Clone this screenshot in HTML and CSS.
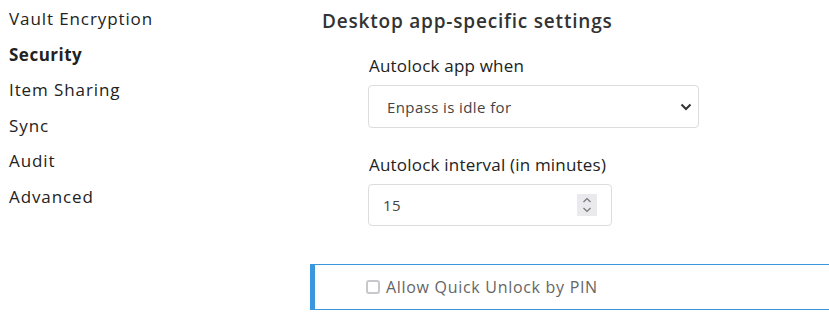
FILE: index.html
```html
<!DOCTYPE html>
<html lang="en">
<head>
    <meta charset="UTF-8">
    <meta name="viewport" content="width=device-width, initial-scale=1.0">
    <title>Security settings</title>
    <link rel="stylesheet" href="styles.css">
</head>
<body>
    <div class="layout">
        <nav class="side-nav">
            <div class="nav-item">Vault Encryption</div>
            <div class="nav-item active">Security</div>
            <div class="nav-item">Item Sharing</div>
            <div class="nav-item">Sync</div>
            <div class="nav-item">Audit</div>
            <div class="nav-item">Advanced</div>
        </nav>

        <main class="content">
            <h2 class="section-title">Desktop app-specific settings</h2>

            <div class="field">
                <div class="field-label">Autolock app when</div>
                <div class="select-box">
                    <span>Enpass is idle for</span>
                    <svg class="chevron" width="12" height="8" viewBox="0 0 12 8">
                        <path d="M1.5 1.5 L6 6 L10.5 1.5" fill="none" stroke="#333" stroke-width="2"/>
                    </svg>
                </div>
            </div>

            <div class="field">
                <div class="field-label">Autolock interval (in minutes)</div>
                <div class="number-box">
                    <span>15</span>
                    <div class="spinner">
                        <svg width="10" height="18" viewBox="0 0 10 18">
                            <path d="M1.5 6 L5 2.5 L8.5 6" fill="none" stroke="#777" stroke-width="1.2"/>
                            <path d="M1.5 12 L5 15.5 L8.5 12" fill="none" stroke="#777" stroke-width="1.2"/>
                        </svg>
                    </div>
                </div>
            </div>

            <!-- highlighted option row -->
            <div class="option-row">
                <label class="checkbox-label">
                    <span class="checkbox"></span>
                    Allow Quick Unlock by PIN
                </label>
            </div>
        </main>
    </div>
</body>
</html>
```

FILE: styles.css
```css
body {
    margin: 0;
    font-family: "Open Sans", Lato, sans-serif;
    color: #222;
    background-color: #fff;
    overflow: hidden;
}
.layout {
    display: flex;
    width: 900px;
}
.side-nav {
    width: 301px;
    padding: 1px 0 0 9px;
}
.nav-item {
    font-size: 17px;
    line-height: 35.5px;
    letter-spacing: 0.9px;
    color: #222;
}
.nav-item.active {
    font-weight: 700;
    letter-spacing: 0.5px;
}
.content {
    flex: 1;
    padding-top: 9px;
}
.section-title {
    margin: 0 0 23px 12px;
    font-size: 19px;
    line-height: 24px;
    font-weight: 600;
    letter-spacing: 0.8px;
    color: #333;
}
.field {
    padding-left: 58px;
    margin-bottom: 27px;
}
.field-label {
    font-size: 17px;
    line-height: 20px;
    letter-spacing: 0.2px;
    margin-left: 1px;
    margin-bottom: 9px;
    color: #222;
}
.select-box {
    width: 331px;
    height: 43px;
    border: 1px solid #dcdcdc;
    border-radius: 4px;
    display: flex;
    align-items: center;
    justify-content: space-between;
    padding: 0 6px 0 18px;
    box-sizing: border-box;
    font-size: 15px;
    letter-spacing: 0.4px;
    color: #444;
}
.number-box {
    width: 244px;
    height: 42px;
    border: 1px solid #dcdcdc;
    border-radius: 4px;
    box-sizing: border-box;
    display: flex;
    align-items: center;
    justify-content: space-between;
    padding: 0 14px 0 14px;
    font-size: 15px;
    letter-spacing: 0.4px;
    color: #444;
}
.spinner {
    width: 20px;
    height: 22px;
    background-color: #e9e9ee;
    display: flex;
    align-items: center;
    justify-content: center;
}
.option-row {
    margin-top: 38px;
    height: 44px;
    border-top: 1px solid #3a96dd;
    border-bottom: 1px solid #3a96dd;
    border-left: 5px solid #3a96dd;
    display: flex;
    align-items: center;
    padding-left: 51px;
}
.checkbox-label {
    display: flex;
    align-items: center;
    gap: 6px;
    font-size: 16px;
    letter-spacing: 0.7px;
    color: #666;
}
.checkbox {
    width: 10px;
    height: 10px;
    border: 2px solid #c8c8cc;
    border-radius: 3px;
}
```
